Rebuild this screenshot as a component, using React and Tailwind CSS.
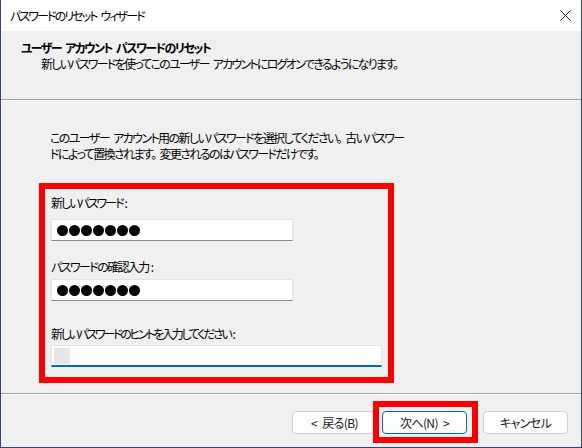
import React from 'react';

const font = "[font-family:'Noto_Sans_CJK_JP','Noto_Sans',sans-serif] [font-feature-settings:'palt'] tracking-[-1.6px] [word-spacing:3px]";

const CloseIcon = () => (
    <svg width="11" height="11" viewBox="0 0 11 11" fill="none" stroke="#1a1a1a" strokeWidth="1">
        <path d="M0.5 0.5L10.5 10.5M10.5 0.5L0.5 10.5" />
    </svg>
);

const Dots = () => (
    <div className="flex items-center gap-[1px] pl-[5px]">
        {[0, 1, 2, 3, 4, 5, 6].map((i) => (
            <span key={i} className="w-[11px] h-[11px] rounded-full bg-black" />
        ))}
    </div>
);

const PasswordBox = () => (
    <div className="w-[242px] h-[22px] bg-white border border-[#e3e3e3] border-b-[#8a8a8a] flex items-center">
        <Dots />
    </div>
);

const Label = ({ text, className }) => (
    <div className={className}>
        {text}
        <span className="pl-[2px] tracking-normal">:</span>
    </div>
);

const Button = ({ label, focused }) => (
    <div
        className={
            'w-[85px] h-[23px] rounded-[4px] bg-[#fdfdfd] flex items-center justify-center text-[12px] tracking-[-0.6px] text-[#1a1a1a] border ' +
            (focused ? 'border-[#0067c0]' : 'border-[#d0d0d0]')
        }
    >
        {label}
    </div>
);

export default function App() {
    return (
        <div className={`w-[582px] h-[448px] bg-[#f0f0f0] border-x border-b border-[#34457a] flex flex-col leading-[16px] text-[12px] text-black ${font}`}>
            {/* title bar */}
            <div className="h-[31px] bg-white flex items-center justify-between pl-[9px] pr-[10px] shrink-0">
                <span className="tracking-[-1.9px]">パスワードのリセット ウィザード</span>
                <CloseIcon />
            </div>

            {/* header */}
            <div className="h-[68px] shrink-0 pt-[9px]">
                <div className="pl-[20px] font-bold">ユーザー アカウント パスワードのリセット</div>
                <div className="pl-[40px] tracking-[-1.75px]">新しいパスワードを使ってこのユーザー アカウントにログオンできるようになります。</div>
            </div>
            <div className="h-px bg-[#a0a0a0] shrink-0" />
            <div className="h-px bg-white shrink-0" />

            {/* body */}
            <div className="flex-1 pl-[49px]">
                <div className="mt-[29px] whitespace-nowrap">
                    このユーザー アカウント用の新しいパスワードを選択してください。 古いパスワー
                    <br />
                    ドによって置換されます。 変更されるのはパスワードだけです。
                </div>

                <div className="mt-[21px] -ml-[11px] w-[355px] border-[6px] border-[#ff0000] pl-[6px] pt-[6px] pb-[10px]">
                    <Label text="新しいパスワード" className="tracking-[-2px]" />
                    <div className="mt-[8px]">
                        <PasswordBox />
                    </div>
                    <Label text="パスワードの確認入力" className="mt-[18px]" />
                    <div className="mt-[4px]">
                        <PasswordBox />
                    </div>
                    <Label text="新しいパスワードのヒントを入力してください" className="mt-[25px] tracking-[-2.3px]" />
                    <div className="mt-[3px] w-[331px] h-[22px] bg-white border border-[#e3e3e3] border-b-2 border-b-[#0067c0] flex items-center pl-[2px]">
                        <span className="w-[16px] h-[16px] bg-[#e6e6e6]" />
                    </div>
                </div>
            </div>

            <div className="h-px bg-[#a0a0a0] shrink-0" />
            <div className="h-px bg-white shrink-0" />

            {/* footer */}
            <div className="h-[52px] shrink-0 flex justify-end items-start pt-[16px] pr-[13px] gap-[5px]">
                <Button label="< 戻る(B)" />
                <div className="relative">
                    <Button label="次へ(N) >" focused />
                    <span className="absolute -left-[9px] -right-[11px] -top-[10px] -bottom-[9px] border-[6px] border-[#ff0000]" />
                </div>
                <div className="ml-[11px]">
                    <Button label="キャンセル" />
                </div>
            </div>
        </div>
    );
}
